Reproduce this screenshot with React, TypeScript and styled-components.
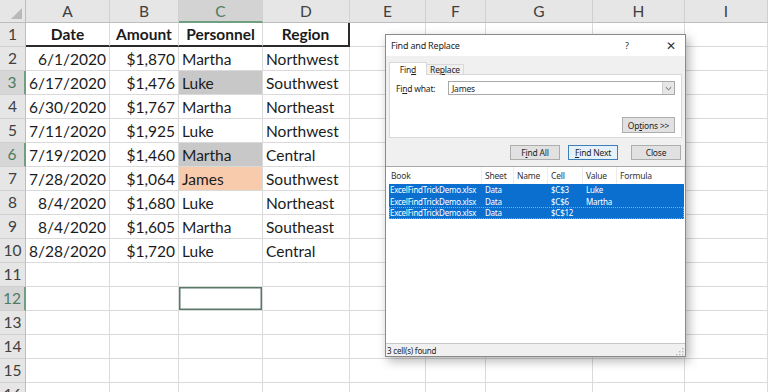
import React from "react";
import styled, { createGlobalStyle, css } from "styled-components";

const Global = createGlobalStyle`
  html, body { margin: 0; padding: 0; background: #fff; overflow: hidden; }
  #root { width: 768px; height: 392px; position: relative; overflow: hidden; }
`;

const COLS = ["A", "B", "C", "D", "E", "F", "G", "H", "I"];

const Sheet = styled.div`
  display: grid;
  grid-template-columns: 26px 84px 69px 84px 87px 76px 60px 107px 92px 1fr;
  grid-template-rows: 22.5px repeat(16, 24px);
  font-family: Lato, "Liberation Sans", sans-serif;
  color: #1b1b1b;
`;

const Corner = styled.div`
  position: relative;
  background: #e6e6e6;
  border-right: 1px solid #bdbdbd;
  border-bottom: 1px solid #bdbdbd;
  box-sizing: border-box;
  &::after {
    content: "";
    position: absolute;
    right: 3px;
    bottom: 3px;
    border-style: solid;
    border-width: 0 0 11px 11px;
    border-color: transparent transparent #b9b9b9 transparent;
  }
`;

const ColHead = styled.div<{ $sel?: boolean }>`
  box-sizing: border-box;
  display: flex;
  align-items: center;
  justify-content: center;
  font-size: 15.5px;
  background: ${(p) => (p.$sel ? "#d3d3d3" : "#e6e6e6")};
  color: ${(p) => (p.$sel ? "#4f7a61" : "#404040")};
  border-right: 1px solid #d0d0d0;
  border-bottom: ${(p) => (p.$sel ? "2px solid #6f9e80" : "1px solid #bdbdbd")};
  padding-top: 1px;
`;

const RowHead = styled.div<{ $sel?: boolean }>`
  box-sizing: border-box;
  display: flex;
  align-items: center;
  justify-content: center;
  font-size: 15.5px;
  background: ${(p) => (p.$sel ? "#d6d6d6" : "#e6e6e6")};
  color: ${(p) => (p.$sel ? "#4f7a61" : "#404040")};
  border-bottom: 1px solid #d0d0d0;
  border-right: ${(p) => (p.$sel ? "2px solid #6f9e80" : "1px solid #bdbdbd")};
`;

const Cell = styled.div<{
  $align?: "left" | "right" | "center";
  $bold?: boolean;
  $fill?: string;
  $thickBottom?: boolean;
  $thickRight?: boolean;
  $active?: boolean;
}>`
  box-sizing: border-box;
  display: flex;
  align-items: center;
  justify-content: ${(p) =>
    p.$align === "right" ? "flex-end" : p.$align === "center" ? "center" : "flex-start"};
  padding: 1px 3px 0 3px;
  font-size: 15.5px;
  font-weight: ${(p) => (p.$bold ? 700 : 400)};
  white-space: nowrap;
  overflow: hidden;
  background: ${(p) => p.$fill || "#fff"};
  border-right: ${(p) => (p.$thickRight ? "2px solid #2b2b2b" : "1px solid #dadada")};
  border-bottom: ${(p) => (p.$thickBottom ? "2px solid #2b2b2b" : "1px solid #dadada")};
  ${(p) =>
    p.$active &&
    css`
      box-shadow: inset 0 0 0 1.5px #5a7a68;
    `}
`;

type Row = [string, string, string, string, string?];
const DATA: Row[] = [
  ["6/1/2020", "$1,870", "Martha", "Northwest"],
  ["6/17/2020", "$1,476", "Luke", "Southwest", "#c8c8c8"],
  ["6/30/2020", "$1,767", "Martha", "Northeast"],
  ["7/11/2020", "$1,925", "Luke", "Northwest"],
  ["7/19/2020", "$1,460", "Martha", "Central", "#c8c8c8"],
  ["7/28/2020", "$1,064", "James", "Southwest", "#f8cbad"],
  ["8/4/2020", "$1,680", "Luke", "Northeast"],
  ["8/4/2020", "$1,605", "Martha", "Southeast"],
  ["8/28/2020", "$1,720", "Luke", "Central"],
];

const SEL_ROWS = [3, 6, 12];

/* ---------- dialog ---------- */

const Dialog = styled.div`
  position: absolute;
  left: 385px;
  top: 34px;
  width: 301px;
  height: 323px;
  box-sizing: border-box;
  border: 1px solid #8a8a8a;
  background: #f0f0f0;
  box-shadow: 3px 4px 10px rgba(0, 0, 0, 0.3);
  display: flex;
  flex-direction: column;
  font-family: "Noto Sans", "Open Sans", sans-serif;
  font-size: 8.5px;
  color: #1e1e1e;
`;

const TitleBar = styled.div`
  height: 21px;
  background: #fff;
  display: flex;
  align-items: center;
  padding-left: 5px;
`;

const Title = styled.div`
  flex: 1;
  font-size: 9px;
  letter-spacing: -0.2px;
`;

const TitleBtn = styled.div<{ $gap?: number }>`
  width: 28px;
  text-align: center;
  font-size: ${(p) => (p.$gap ? 9 : 12)}px;
  color: #333;
  margin-right: ${(p) => p.$gap || 0}px;
`;

const Body = styled.div`
  padding: 6px 3px 0 3px;
  display: flex;
  flex-direction: column;
`;

const Tabs = styled.div`
  display: flex;
  align-items: flex-end;
  height: 12px;
  position: relative;
  z-index: 1;
`;

const Tab = styled.div<{ $active?: boolean }>`
  box-sizing: border-box;
  display: flex;
  align-items: center;
  justify-content: center;
  font-size: 8.5px;
  letter-spacing: -0.2px;
  border: 1px solid #d9d9d9;
  ${(p) =>
    p.$active
      ? css`
          width: 38px;
          height: 13px;
          margin-bottom: -1px;
          background: #fff;
          border-bottom: none;
        `
      : css`
          width: 37px;
          height: 10px;
          background: #f0f0f0;
          border-left: none;
          border-bottom: none;
        `}
`;

const Panel = styled.div`
  box-sizing: border-box;
  height: 64px;
  background: #fff;
  border: 1px solid #d9d9d9;
  padding: 6px 6px 4px 6px;
  display: flex;
  flex-direction: column;
  justify-content: space-between;
`;

const FindRow = styled.div`
  display: flex;
  align-items: center;
`;

const Label = styled.div`
  width: 52px;
  letter-spacing: -0.2px;
`;

const Combo = styled.div`
  flex: 1;
  height: 14px;
  box-sizing: border-box;
  border: 1px solid #a9a9a9;
  display: flex;
  align-items: stretch;
`;

const ComboText = styled.div`
  flex: 1;
  display: flex;
  align-items: center;
  padding-left: 3px;
  letter-spacing: -0.2px;
`;

const ComboArrow = styled.div`
  width: 11px;
  background: #e6e6e6;
  border-left: 1px solid #cfcfcf;
  display: flex;
  align-items: center;
  justify-content: center;
`;

const Btn = styled.div<{ $primary?: boolean; $w?: number; $h?: number; $ml?: number }>`
  box-sizing: border-box;
  width: ${(p) => p.$w || 50}px;
  height: ${(p) => p.$h || 15}px;
  display: flex;
  align-items: center;
  justify-content: center;
  letter-spacing: -0.2px;
  background: ${(p) => (p.$primary ? "#e5f1fb" : "#e1e1e1")};
  border: 1px solid ${(p) => (p.$primary ? "#3d7fb6" : "#adadad")};
  margin-left: ${(p) => p.$ml || 0}px;
`;

const OptionsRow = styled.div`
  display: flex;
  justify-content: flex-end;
`;

const ButtonRow = styled.div`
  display: flex;
  justify-content: flex-end;
  margin-top: 7px;
  padding-right: 1px;
`;

const Results = styled.div`
  margin-top: 6px;
  flex: 1;
  background: #fff;
  border-top: 1px solid #a8a8a8;
  display: flex;
  flex-direction: column;
`;

const ResultGrid = styled.div<{ $lead: number }>`
  display: grid;
  grid-template-columns: ${(p) => p.$lead}px 32px 34px 35px 34px 1fr;
`;

const HeadRow = styled(ResultGrid)`
  height: 17px;
  color: #333;
`;

const HeadCell = styled.div<{ $first?: boolean }>`
  display: flex;
  align-items: center;
  padding-left: ${(p) => (p.$first ? 5 : 3)}px;
  border-right: 1px solid #ececec;
  letter-spacing: -0.2px;
`;

const DataRow = styled(ResultGrid)<{ $focus?: boolean }>`
  height: 11.5px;
  margin: 0 1px 0 3px;
  background: #0b6fd0;
  color: #fff;
  font-size: 8px;
  ${(p) =>
    p.$focus &&
    css`
      outline: 1px dotted rgba(255, 255, 255, 0.45);
      outline-offset: -1px;
    `}
`;

const DataCell = styled.div<{ $first?: boolean }>`
  display: flex;
  align-items: center;
  padding-left: ${(p) => (p.$first ? 1 : 3)}px;
  white-space: nowrap;
  overflow: hidden;
  letter-spacing: -0.25px;
`;

const Spacer = styled.div`
  flex: 1;
`;

const StatusBar = styled.div`
  height: 13px;
  box-sizing: border-box;
  border-top: 1px solid #c6c6c6;
  background: #f0f0f0;
  display: flex;
  align-items: center;
  padding-left: 1px;
  font-size: 8px;
  letter-spacing: -0.2px;
`;

const Grip = () => (
  <svg width="8" height="8" viewBox="0 0 8 8" style={{ marginRight: 1, marginTop: 3 }}>
    {[
      [6, 6],
      [3, 6],
      [6, 3],
      [0, 6],
      [3, 3],
      [6, 0],
    ].map(([x, y], i) => (
      <rect key={i} x={x} y={y} width="1.4" height="1.4" fill="#b8b8b8" />
    ))}
  </svg>
);

const U = styled.span`
  text-decoration: underline;
  text-underline-offset: 1px;
`;

const RESULTS = [
  ["ExcelFindTrickDemo.xlsx", "Data", "", "$C$3", "Luke", ""],
  ["ExcelFindTrickDemo.xlsx", "Data", "", "$C$6", "Martha", ""],
  ["ExcelFindTrickDemo.xlsx", "Data", "", "$C$12", "", ""],
];

export default function App() {
  const cells: React.ReactNode[] = [];
  for (let r = 1; r <= 16; r++) {
    const sel = SEL_ROWS.includes(r);
    cells.push(
      <RowHead key={`h${r}`} $sel={sel}>
        {r}
      </RowHead>
    );
    for (let c = 0; c < COLS.length; c++) {
      const key = `${r}-${c}`;
      if (r === 1 && c < 4) {
        cells.push(
          <Cell key={key} $align="center" $bold $thickBottom $thickRight={c === 3}>
            {["Date", "Amount", "Personnel", "Region"][c]}
          </Cell>
        );
      } else if (r >= 2 && r <= 10 && c < 4) {
        const d = DATA[r - 2];
        cells.push(
          <Cell key={key} $align={c < 2 ? "right" : "left"} $fill={c === 2 ? d[4] : undefined}>
            {d[c]}
          </Cell>
        );
      } else {
        cells.push(<Cell key={key} $active={r === 12 && c === 2} />);
      }
    }
  }

  return (
    <>
      <Global />
      <Sheet>
        <Corner />
        {COLS.map((c) => (
          <ColHead key={c} $sel={c === "C"}>
            {c}
          </ColHead>
        ))}
        {cells}
      </Sheet>
      <Dialog>
        <TitleBar>
          <Title>Find and Replace</Title>
          <TitleBtn $gap={16}>?</TitleBtn>
          <TitleBtn>✕</TitleBtn>
        </TitleBar>
        <Body>
          <Tabs>
            <Tab $active>
              Fin<U>d</U>
            </Tab>
            <Tab>
              Re<U>p</U>lace
            </Tab>
          </Tabs>
          <Panel>
            <FindRow>
              <Label>
                Fi<U>n</U>d what:
              </Label>
              <Combo>
                <ComboText>James</ComboText>
                <ComboArrow>
                  <svg width="7" height="5" viewBox="0 0 7 5">
                    <path d="M0.8 1.2 L3.5 3.8 L6.2 1.2" fill="none" stroke="#555" strokeWidth="0.9" />
                  </svg>
                </ComboArrow>
              </Combo>
            </FindRow>
            <OptionsRow>
              <Btn $w={53} $h={16}>
                Op<U>t</U>ions &gt;&gt;
              </Btn>
            </OptionsRow>
          </Panel>
          <ButtonRow>
            <Btn>
              F<U>i</U>nd All
            </Btn>
            <Btn $primary $ml={8}>
              <U>F</U>ind Next
            </Btn>
            <Btn $ml={13}>Close</Btn>
          </ButtonRow>
        </Body>
        <Results>
          <HeadRow $lead={96}>
            {["Book", "Sheet", "Name", "Cell", "Value", "Formula"].map((h, i) => (
              <HeadCell key={h} $first={i === 0}>
                {h}
              </HeadCell>
            ))}
          </HeadRow>
          {RESULTS.map((r, i) => (
            <DataRow key={i} $lead={93} $focus={i === 2}>
              {r.map((v, j) => (
                <DataCell key={j} $first={j === 0}>
                  {v}
                </DataCell>
              ))}
            </DataRow>
          ))}
          <Spacer />
        </Results>
        <StatusBar>
          <Spacer>3 cell(s) found</Spacer>
          <Grip />
        </StatusBar>
      </Dialog>
    </>
  );
}
